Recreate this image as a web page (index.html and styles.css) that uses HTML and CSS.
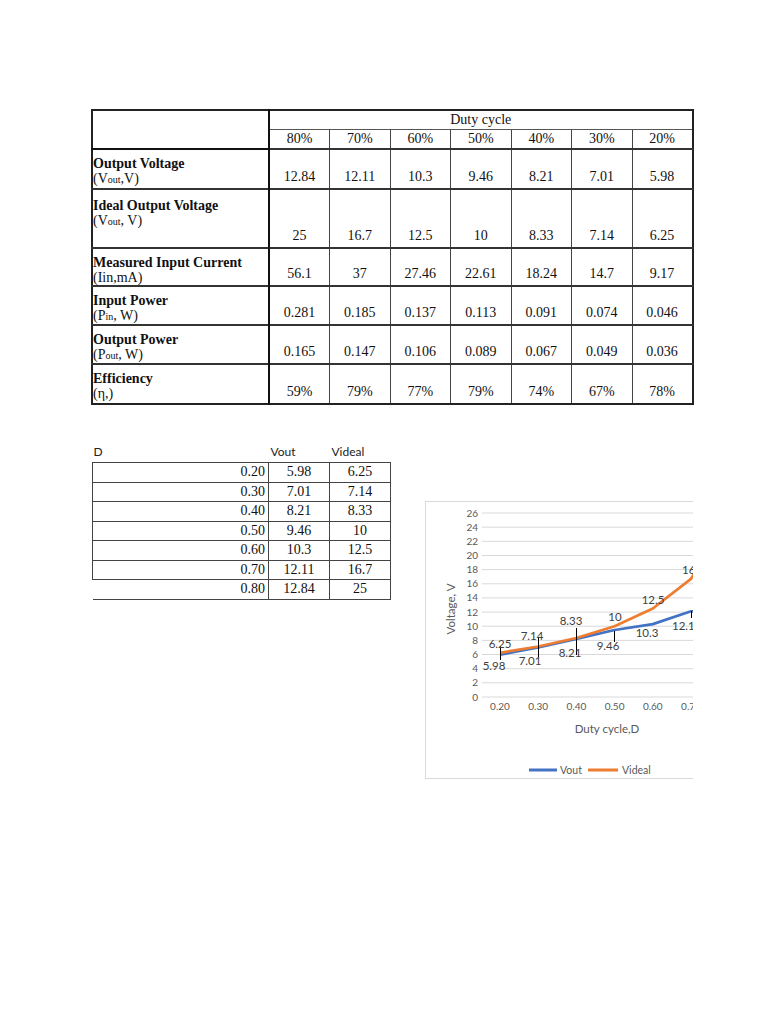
FILE: index.html
```html
<!DOCTYPE html>
<html>
<head>
<meta charset="utf-8">
<link rel="stylesheet" href="styles.css">
</head>
<body>
<div class="page">
  <table class="main">
    <colgroup>
      <col class="c-lab"><col class="c-v"><col class="c-v"><col class="c-v"><col class="c-v"><col class="c-v"><col class="c-v"><col class="c-v">
    </colgroup>
    <tr class="h1">
      <td class="lab corner" rowspan="2"></td>
      <td class="duty" colspan="7">Duty cycle</td>
    </tr>
    <tr class="h2">
      <td class="pct">80%</td><td class="pct">70%</td><td class="pct">60%</td><td class="pct">50%</td><td class="pct">40%</td><td class="pct">30%</td><td class="pct">20%</td>
    </tr>
    <tr class="r-ov">
      <td class="lab"><b>Output Voltage</b><br>(V<span class="sm">out</span>,V)</td>
      <td>12.84</td><td>12.11</td><td>10.3</td><td>9.46</td><td>8.21</td><td>7.01</td><td>5.98</td>
    </tr>
    <tr class="r-iov">
      <td class="lab lab-ideal"><b>Ideal Output Voltage</b><br>(V<span class="sm">out</span>, V)</td>
      <td>25</td><td>16.7</td><td>12.5</td><td>10</td><td>8.33</td><td>7.14</td><td>6.25</td>
    </tr>
    <tr class="r-mic">
      <td class="lab"><b>Measured Input Current</b><br>(Iin,mA)</td>
      <td>56.1</td><td>37</td><td>27.46</td><td>22.61</td><td>18.24</td><td>14.7</td><td>9.17</td>
    </tr>
    <tr class="r-ip">
      <td class="lab"><b>Input Power</b><br>(P<span class="sm">in</span>, W)</td>
      <td>0.281</td><td>0.185</td><td>0.137</td><td>0.113</td><td>0.091</td><td>0.074</td><td>0.046</td>
    </tr>
    <tr class="r-op">
      <td class="lab"><b>Output Power</b><br>(P<span class="sm">out</span>, W)</td>
      <td>0.165</td><td>0.147</td><td>0.106</td><td>0.089</td><td>0.067</td><td>0.049</td><td>0.036</td>
    </tr>
    <tr class="r-eff">
      <td class="lab"><b>Efficiency</b><br>(η,)</td>
      <td>59%</td><td>79%</td><td>77%</td><td>79%</td><td>74%</td><td>67%</td><td>78%</td>
    </tr>
  </table>

  <div class="lower">
    <table class="dtable">
      <colgroup><col class="d-c1"><col class="d-c2"><col class="d-c3"></colgroup>
      <tr class="dhead"><td>D</td><td>Vout</td><td>Videal</td></tr>
      <tr class="dr"><td class="dnum">0.20</td><td>5.98</td><td>6.25</td></tr>
      <tr class="dr"><td class="dnum">0.30</td><td>7.01</td><td>7.14</td></tr>
      <tr class="dr"><td class="dnum">0.40</td><td>8.21</td><td>8.33</td></tr>
      <tr class="dr"><td class="dnum">0.50</td><td>9.46</td><td>10</td></tr>
      <tr class="dr"><td class="dnum">0.60</td><td>10.3</td><td>12.5</td></tr>
      <tr class="dr"><td class="dnum">0.70</td><td>12.11</td><td>16.7</td></tr>
      <tr class="dr dlast"><td class="dnum">0.80</td><td>12.84</td><td>25</td></tr>
    </table>

    <div class="chart">
      <svg class="chart-svg" width="330" height="280" viewBox="0 0 330 280" xmlns="http://www.w3.org/2000/svg">
        <rect x="0.5" y="0.5" width="328" height="277" fill="#fff" stroke="#d9d9d9" stroke-width="1"/>
        <g stroke="#d9d9d9" stroke-width="1">
          <line x1="57" x2="330" y1="196" y2="196"/>
          <line x1="57" x2="330" y1="181.8" y2="181.8"/>
          <line x1="57" x2="330" y1="167.7" y2="167.7"/>
          <line x1="57" x2="330" y1="153.5" y2="153.5"/>
          <line x1="57" x2="330" y1="139.4" y2="139.4"/>
          <line x1="57" x2="330" y1="125.2" y2="125.2"/>
          <line x1="57" x2="330" y1="111.1" y2="111.1"/>
          <line x1="57" x2="330" y1="96.9" y2="96.9"/>
          <line x1="57" x2="330" y1="82.8" y2="82.8"/>
          <line x1="57" x2="330" y1="68.6" y2="68.6"/>
          <line x1="57" x2="330" y1="54.5" y2="54.5"/>
          <line x1="57" x2="330" y1="40.3" y2="40.3"/>
          <line x1="57" x2="330" y1="26.2" y2="26.2"/>
          <line x1="57" x2="330" y1="12" y2="12"/>
        </g>
        <g class="ax" text-anchor="end">
          <text x="53" y="199.5">0</text>
          <text x="53" y="185.3">2</text>
          <text x="53" y="171.2">4</text>
          <text x="53" y="157">6</text>
          <text x="53" y="142.9">8</text>
          <text x="53" y="128.7">10</text>
          <text x="53" y="114.6">12</text>
          <text x="53" y="100.4">14</text>
          <text x="53" y="86.3">16</text>
          <text x="53" y="72.1">18</text>
          <text x="53" y="58">20</text>
          <text x="53" y="43.8">22</text>
          <text x="53" y="29.7">24</text>
          <text x="53" y="15.5">26</text>
        </g>
        <g class="ax" text-anchor="middle">
          <text x="75" y="209">0.20</text>
          <text x="113.2" y="209">0.30</text>
          <text x="151.4" y="209">0.40</text>
          <text x="189.6" y="209">0.50</text>
          <text x="227.8" y="209">0.60</text>
          <text x="266" y="209">0.70</text>
          <text x="304.2" y="209">0.80</text>
        </g>
        <polyline fill="none" stroke="#4472c4" stroke-width="2.75" stroke-linejoin="round" points="75,153.7 113.2,146.4 151.4,137.9 189.6,129 227.8,123.1 266,110.3 304.2,105.1"/>
        <polyline fill="none" stroke="#ed7d31" stroke-width="2.75" stroke-linejoin="round" points="75,151.8 113.2,145.5 151.4,137 189.6,125.2 227.8,107.5 266,77.8 304.2,19.1"/>
        <g stroke="#000" stroke-width="1">
          <line x1="75.5" x2="75.5" y1="145" y2="159"/>
          <line x1="113.5" x2="113.5" y1="136" y2="156"/>
          <line x1="151.5" x2="151.5" y1="127" y2="154"/>
          <line x1="189.5" x2="189.5" y1="130" y2="141"/>
          <line x1="266.5" x2="266.5" y1="110" y2="117"/>
        </g>
        <g class="dl" text-anchor="middle">
          <text x="75" y="147">6.25</text>
          <text x="69" y="169">5.98</text>
          <text x="107" y="139">7.14</text>
          <text x="105" y="164">7.01</text>
          <text x="146" y="124">8.33</text>
          <text x="145" y="156">8.21</text>
          <text x="190" y="120">10</text>
          <text x="183" y="149">9.46</text>
          <text x="228" y="103">12.5</text>
          <text x="222" y="136">10.3</text>
        </g>
        <g class="dl" text-anchor="start">
          <text x="257" y="73">16.7</text>
          <text x="247" y="129">12.11</text>
        </g>
        <text class="title" x="26" y="108" text-anchor="middle" transform="rotate(-90 26 108)" dy="4">Voltage, V</text>
        <text class="title" x="182" y="232" text-anchor="middle">Duty cycle,D</text>
        <line x1="104" x2="132" y1="269" y2="269" stroke="#4472c4" stroke-width="3"/>
        <text class="leg" x="135" y="273">Vout</text>
        <line x1="163" x2="193" y1="269" y2="269" stroke="#ed7d31" stroke-width="3"/>
        <text class="leg" x="197" y="273">Videal</text>
      </svg>
    </div>
  </div>
</div>
</body>
</html>
```

FILE: styles.css
```css
html, body {
  margin: 0;
  padding: 0;
  background: #fff;
}

.page {
  padding: 109px 0 0 91px;
}

/* ---------- main table ---------- */
.main {
  border-collapse: collapse;
  table-layout: fixed;
  width: 601px;
  border: 2px solid #222;
  font-family: "Liberation Serif", "Times New Roman", serif;
  font-size: 14px;
  color: #111;
}

.c-lab { width: 177px; }
.c-v { width: 60.5px; }

.main td {
  border: 1px solid #444;
  border-top: 2px solid #333;
  padding: 0 0 3px;
  text-align: center;
  vertical-align: bottom;
  line-height: 16px;
}

.main .lab {
  border-right: 2px solid #111;
  text-align: left;
  vertical-align: top;
  line-height: 15px;
  padding: 6px 0 0;
}

.main .lab-ideal {
  padding-top: 8px;
}

.main .lab b {
  font-weight: bold;
}

.sm {
  font-size: 10px;
}

.main .corner {
  border-top: 2px solid #222;
  border-bottom: 2px solid #111;
}

.main .duty {
  border-top: 2px solid #222;
  border-bottom: 1px solid #555;
  vertical-align: middle;
  padding: 0;
}

.main .pct {
  border-top: 1px solid #555;
  vertical-align: middle;
  padding: 0;
}

.h1 { height: 19px; }
.h2 { height: 20px; }
.r-ov { height: 40px; }
.r-iov { height: 59px; }
.r-mic { height: 38px; }
.r-ip { height: 39px; }
.r-op { height: 39px; }
.r-eff { height: 40px; }

/* ---------- lower section ---------- */
.lower {
  display: flex;
  align-items: flex-start;
  gap: 34px;
  margin-top: 39px;
}

.dtable {
  border-collapse: collapse;
  table-layout: fixed;
  width: 298px;
  font-family: "Liberation Serif", "Times New Roman", serif;
  font-size: 14px;
  color: #111;
  margin-left: 1px;
}

.d-c1 { width: 176px; }
.d-c2 { width: 61px; }
.d-c3 { width: 61px; }

.dhead td {
  font-family: Lato, "Liberation Sans", sans-serif;
  font-size: 12px;
  color: #222;
  text-align: left;
  padding: 0 2px;
  height: 18px;
  vertical-align: top;
  border: none;
}

.dhead td:first-child {
  padding-left: 1px;
}

.dr td {
  border: 1px solid #444;
  height: 18.5px;
  padding: 0;
  text-align: center;
  vertical-align: middle;
  line-height: 16px;
}

.dr td.dnum {
  text-align: right;
  padding-right: 3px;
}

.dr:first-of-type td.dnum {
  border-right: 2px solid #111;
}

.dlast td.dnum {
  border-left: none;
}

/* ---------- chart ---------- */
.chart {
  width: 268px;
  height: 278px;
  overflow: hidden;
  margin-top: 57px;
}

.chart-svg {
  display: block;
}

.chart-svg .ax {
  font-family: Lato, "Liberation Sans", sans-serif;
  font-size: 10px;
  fill: #595959;
}

.chart-svg .dl {
  font-family: Lato, "Liberation Sans", sans-serif;
  font-size: 11.5px;
  fill: #404040;
}

.chart-svg .title {
  font-family: Lato, "Liberation Sans", sans-serif;
  font-size: 11.5px;
  fill: #595959;
}

.chart-svg .leg {
  font-family: Lato, "Liberation Sans", sans-serif;
  font-size: 10.5px;
  fill: #595959;
}
```
